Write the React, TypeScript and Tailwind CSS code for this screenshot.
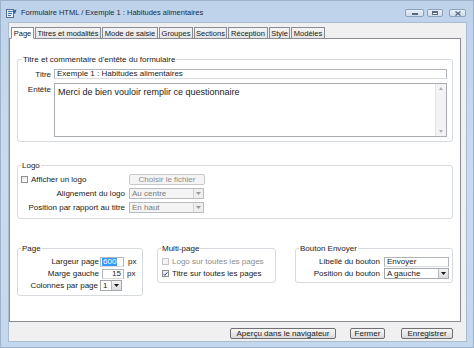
import React from "react";

const tabs: [string, number][] = [
  ["Page", 23],
  ["Titres et modalités", 66],
  ["Mode de saisie", 56],
  ["Groupes", 34],
  ["Sections", 33],
  ["Réception", 40],
  ["Style", 21],
  ["Modèles", 34],
];

function Arrow({ gray }: { gray?: boolean }) {
  return (
    <svg width="5" height="3" viewBox="0 0 5 3">
      <path d="M0 0H5L2.5 3Z" fill={gray ? "#9a9a9a" : "#1a1a1a"} />
    </svg>
  );
}

function Select({ text, w, disabled }: { text: string; w: string; disabled?: boolean }) {
  return (
    <div
      className={`${w} h-[11px] flex items-stretch border ${
        disabled ? "border-[#b8bcc0] bg-[#f4f4f4] text-[#7a7a7a]" : "border-[#a4a8ad] bg-white text-[#1a1a1a]"
      }`}
    >
      <div className="flex-1 pl-[2px] leading-[9px] overflow-hidden whitespace-nowrap">{text}</div>
      <div
        className={`w-[10px] flex items-center justify-center border-l ${
          disabled ? "border-[#d0d3d6] bg-[#eeeeee]" : "border-[#b5b8bc] bg-gradient-to-b from-[#f4f4f4] to-[#dcdcdc]"
        }`}
      >
        <Arrow gray={disabled} />
      </div>
    </div>
  );
}

function Check({ checked, disabled }: { checked?: boolean; disabled?: boolean }) {
  return (
    <div
      className={`w-[7px] h-[7px] border flex items-center justify-center ${
        disabled ? "border-[#c4c6c8] bg-[#f4f4f4]" : "border-[#8f8f8f] bg-gradient-to-br from-[#e6e6e6] to-white"
      }`}
    >
      {checked && (
        <svg width="6" height="6" viewBox="0 0 6 6">
          <path d="M0.8 3.1L2.3 4.6L5.2 1" stroke="#2a3d6b" strokeWidth="1.2" fill="none" />
        </svg>
      )}
    </div>
  );
}

function Btn({ text, w, disabled }: { text: string; w: string; disabled?: boolean }) {
  return (
    <div
      className={`${w} h-[11px] rounded-[2px] border flex items-center justify-center leading-[9px] whitespace-nowrap ${
        disabled
          ? "border-[#c6c8ca] bg-[#f4f4f4] text-[#8d8d8d]"
          : "border-[#707070] bg-gradient-to-b from-[#f6f6f6] via-[#e9e9e9] to-[#d8d8d8] text-[#1a1a1a]"
      }`}
    >
      {text}
    </div>
  );
}

const inputCls = "h-[10px] border border-[#b2b5bb] border-b-[#d6dae0] bg-white leading-[8px] whitespace-nowrap overflow-hidden";
const fsCls = "border border-[#d5dadf] rounded-[3px] min-w-0";
const legendCls = "ml-[3px] px-[1px] leading-[9px] text-[#1a1a1a]";

export default function App() {
  return (
    <div className="w-[474px] h-[348px] overflow-hidden bg-gradient-to-b from-[#bed3ea] via-[#c9dbef] to-[#c3d7ed] flex flex-col font-['Liberation_Sans',Arial,sans-serif] text-[8px] text-[#1a1a1a] border border-[#9cb2cc]">
      {/* title bar */}
      <div className="h-[21px] flex items-center pl-[5px] pr-[7px] pt-[3px]">
        <svg width="11" height="10" viewBox="0 0 11 10">
          <rect x="0.5" y="1.5" width="7" height="8" fill="#e8eef6" stroke="#5a6f8c" />
          <rect x="2" y="3" width="4" height="1" fill="#3b6fb8" />
          <rect x="2" y="5" width="4" height="1" fill="#3b6fb8" />
          <rect x="2" y="7" width="3" height="1" fill="#3b6fb8" />
          <path d="M6 3L10.5 1.5L9 6Z" fill="#2e5fa8" />
        </svg>
        <span className="ml-[4px] text-[7.5px] text-[#1b2a3d]">Formulaire HTML / Exemple 1 : Habitudes alimentaires</span>
        <div className="ml-auto flex items-center">
          <div className="w-[19px] h-[8px] rounded-[2px] border border-[#8ba1bd] bg-gradient-to-b from-[#e9f0f8] to-[#cfdcec] flex items-end justify-center pb-[1px]">
            <div className="w-[6px] h-[2px] bg-white border border-[#55687f]" />
          </div>
          <div className="ml-[3px] w-[16px] h-[8px] rounded-[2px] border border-[#8ba1bd] bg-gradient-to-b from-[#e9f0f8] to-[#cfdcec] flex items-center justify-center">
            <div className="w-[6px] h-[4px] border border-[#55687f] border-t-2 bg-white" />
          </div>
          <div className="ml-[6px] w-[17px] h-[8px] rounded-[2px] border border-[#8ba1bd] bg-gradient-to-b from-[#e9f0f8] to-[#cfdcec] flex items-center justify-center">
            <svg width="6" height="5" viewBox="0 0 6 5">
              <path d="M0.5 0.5L5.5 4.5M5.5 0.5L0.5 4.5" stroke="#55687f" strokeWidth="1.3" />
            </svg>
          </div>
        </div>
      </div>

      {/* client area */}
      <div className="ml-[7px] mr-[6px] h-[320px] bg-[#f0f0f0] border border-[#a9bcd2] flex flex-col">
        {/* tabs */}
        <div className="pt-[3px] pl-[2px] flex items-end gap-[1px] h-[15px] text-[7.5px]">
          {tabs.map(([t, w], i) => (
            <div
              key={t}
              style={{ width: w }}
              className={
                i === 0
                  ? "relative z-10 h-[12px] bg-white border border-[#898c95] border-b-white flex items-center justify-center leading-[9px] -mb-px whitespace-nowrap"
                  : "h-[11px] bg-gradient-to-b from-[#f4f4f4] to-[#e4e4e4] border border-[#898c95] border-b-0 flex items-center justify-center leading-[9px] whitespace-nowrap"
              }
            >
              {t}
            </div>
          ))}
        </div>

        {/* panel */}
        <div className="w-[452px] h-[284px] bg-white border border-[#898c95] px-[7px] flex flex-col">
          {/* fieldset 1 */}
          <fieldset className={`${fsCls} mt-[16px] pl-[1px] pr-[5px] pb-[4px]`}>
            <legend className={legendCls}>Titre et commentaire d'entête du formulaire</legend>
            <div className="mt-[5px] flex items-center">
              <div className="w-[32px] text-right leading-[9px]">Titre</div>
              <div className={`${inputCls} ml-[3px] flex-1 pl-[2px] flex items-center`}>Exemple 1 : Habitudes alimentaires</div>
            </div>
            <div className="mt-[4px] flex items-start">
              <div className="w-[32px] text-right leading-[9px] mt-[2px]">Entête</div>
              <div className="ml-[3px] flex-1 h-[54px] border border-[#a9acb2] bg-white flex">
                <div className="flex-1 pl-[3px] pt-[3px] text-[9px] leading-[10px]">Merci de bien vouloir remplir ce questionnaire</div>
                <div className="w-[11px] bg-[#f3f3f3] border-l border-[#e4e4e4] flex flex-col items-center justify-between py-[3px]">
                  <svg width="4" height="3" viewBox="0 0 4 3"><path d="M0 3H4L2 0Z" fill="#b0b0b0" /></svg>
                  <svg width="4" height="3" viewBox="0 0 4 3"><path d="M0 0H4L2 3Z" fill="#b0b0b0" /></svg>
                </div>
              </div>
            </div>
          </fieldset>

          {/* fieldset 2 */}
          <fieldset className={`${fsCls} mt-[19px] pb-[5px]`}>
            <legend className={legendCls}>Logo</legend>
            <div className="mt-[4px] flex items-center">
              <div className="w-[111px] flex items-center pl-[3px]">
                <Check />
                <span className="ml-[3px] leading-[9px]">Afficher un logo</span>
              </div>
              <Btn text="Choisir le fichier" w="w-[76px]" disabled />
            </div>
            <div className="mt-[3px] flex items-center">
              <div className="w-[107px] text-right leading-[9px] whitespace-nowrap">Alignement du logo</div>
              <div className="ml-[4px]">
                <Select text="Au centre" w="w-[75px]" disabled />
              </div>
            </div>
            <div className="mt-[3px] flex items-center">
              <div className="w-[107px] text-right leading-[9px] whitespace-nowrap">Position par rapport au titre</div>
              <div className="ml-[4px]">
                <Select text="En haut" w="w-[75px]" disabled />
              </div>
            </div>
          </fieldset>

          {/* bottom fieldsets */}
          <div className="mt-[25px] flex items-start">
            <fieldset className={`${fsCls} w-[126px] pb-[4px]`}>
              <legend className={legendCls}>Page</legend>
              <div className="mt-[3px] flex items-center h-[11px]">
                <div className="w-[81px] text-right leading-[9px] whitespace-nowrap">Largeur page</div>
                <div className={`${inputCls} ml-[1px] w-[24px] flex items-center pl-[1px]`}>
                  <span className="bg-[#3399ff] text-white px-[1px] leading-[8px]">600</span>
                </div>
                <span className="ml-[4px] leading-[9px]">px</span>
              </div>
              <div className="mt-[1px] flex items-center h-[11px]">
                <div className="w-[81px] text-right leading-[9px] whitespace-nowrap">Marge gauche</div>
                <div className={`${inputCls} ml-[3px] w-[22px] text-right pr-[2px] flex items-center justify-end`}>15</div>
                <span className="ml-[3px] leading-[9px]">px</span>
              </div>
              <div className="mt-[1px] flex items-center h-[11px]">
                <div className="w-[80px] text-right leading-[9px] whitespace-nowrap">Colonnes par page</div>
                <div className="ml-[2px]">
                  <Select text="1" w="w-[22px]" />
                </div>
              </div>
            </fieldset>

            <fieldset className={`${fsCls} ml-[14px] w-[119px] pb-[3px]`}>
              <legend className={legendCls}>Multi-page</legend>
              <div className="mt-[3px] flex items-center h-[11px] pl-[4px]">
                <Check disabled />
                <span className="ml-[3px] leading-[9px] text-[#8d8d8d] whitespace-nowrap">Logo sur toutes les pages</span>
              </div>
              <div className="mt-[1px] flex items-center h-[11px] pl-[4px]">
                <Check checked />
                <span className="ml-[3px] leading-[9px] whitespace-nowrap">Titre sur toutes les pages</span>
              </div>
            </fieldset>

            <fieldset className={`${fsCls} ml-[19px] flex-1 pb-[3px]`}>
              <legend className={legendCls}>Bouton Envoyer</legend>
              <div className="mt-[3px] flex items-center h-[11px]">
                <div className="w-[84px] text-right leading-[9px] whitespace-nowrap">Libellé du bouton</div>
                <div className={`${inputCls} ml-[4px] w-[65px] pl-[2px] flex items-center`}>Envoyer</div>
              </div>
              <div className="mt-[1px] flex items-center h-[11px]">
                <div className="w-[84px] text-right leading-[9px] whitespace-nowrap">Position du bouton</div>
                <div className="ml-[4px]">
                  <Select text="A gauche" w="w-[65px]" />
                </div>
              </div>
            </fieldset>
          </div>
        </div>

        {/* buttons */}
        <div className="mt-[6px] flex justify-end pr-[13px]">
          <Btn text="Aperçu dans le navigateur" w="w-[106px]" />
          <div className="ml-[14px]">
            <Btn text="Fermer" w="w-[35px]" />
          </div>
          <div className="ml-[16px]">
            <Btn text="Enregistrer" w="w-[52px]" />
          </div>
        </div>
      </div>
    </div>
  );
}
